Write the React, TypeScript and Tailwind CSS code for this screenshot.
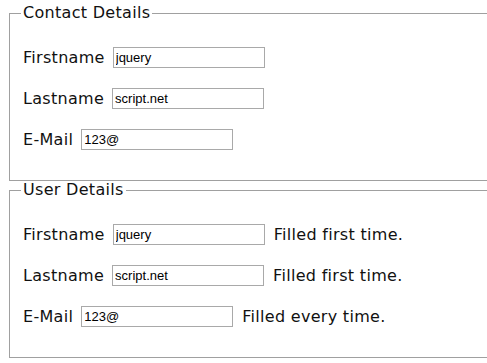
import React from "react";

type Row = { label: string; value: string; note?: string };

function Section({ title, rows, className }: { title: string; rows: Row[]; className: string }) {
  return (
    <fieldset className={"ml-[9px] w-[520px] min-w-[520px] border border-[#a0a0a0] pl-[11px] pb-[30px] " + className}>
      <legend className="px-[2px] text-[16px] leading-[18px] tracking-[0.3px] text-[#111]">{title}</legend>
      <div className="flex flex-col gap-[20px] pt-[25px] pl-[2px]">
        {rows.map((r) => (
          <div key={r.label} className="flex items-center h-[21px]">
            <span className="text-[16px] leading-[21px] tracking-[0.3px] text-[#111] mr-[8px]">{r.label}</span>
            <input
              readOnly
              value={r.value}
              className="w-[152px] h-[21px] border border-[#a9a9a9] bg-white px-[2px] text-[13px] text-black outline-none"
              style={{ fontFamily: '"Liberation Sans", Arial, sans-serif' }}
            />
            {r.note && <span className="ml-[9px] text-[16px] leading-[21px] tracking-[0.3px] text-[#111]">{r.note}</span>}
          </div>
        ))}
      </div>
    </fieldset>
  );
}

export default function App() {
  return (
    <div
      className="w-[487px] h-[363px] overflow-hidden bg-white"
      style={{ fontFamily: '"DejaVu Sans", Verdana, sans-serif' }}
    >
      <Section
        className="mt-[4px]"
        title="Contact Details"
        rows={[
          { label: "Firstname", value: "jquery" },
          { label: "Lastname", value: "script.net" },
          { label: "E-Mail", value: "123@" },
        ]}
      />
      <Section
        className="mt-0"
        title="User Details"
        rows={[
          { label: "Firstname", value: "jquery", note: "Filled first time." },
          { label: "Lastname", value: "script.net", note: "Filled first time." },
          { label: "E-Mail", value: "123@", note: "Filled every time." },
        ]}
      />
    </div>
  );
}
